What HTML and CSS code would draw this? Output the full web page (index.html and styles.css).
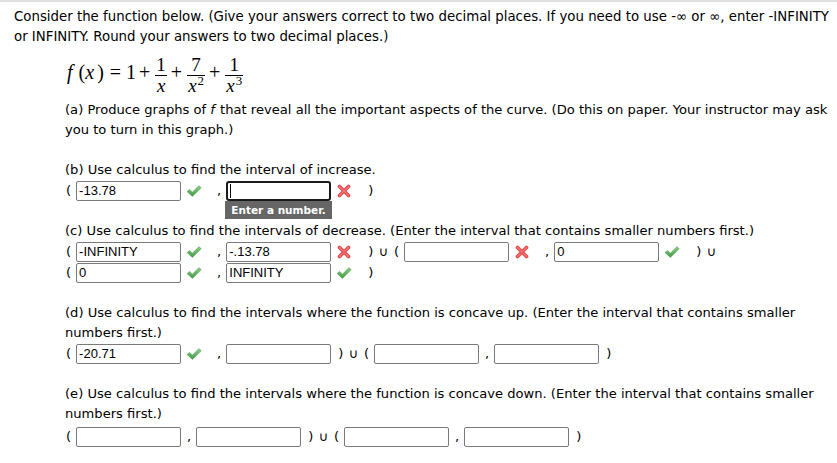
FILE: index.html
```html
<!DOCTYPE html>
<html>
<head>
<meta charset="utf-8">
<link rel="stylesheet" href="styles.css">
</head>
<body>
<div class="page">
  <p class="intro">Consider the function below. (Give your answers correct to two decimal places. If you need to use -∞ or ∞, enter -INFINITY or INFINITY. Round your answers to two decimal places.)</p>

  <div class="formula">
    <span class="mi f">f</span><span class="mo lp">(</span><span class="mi">x</span><span class="mo rp">)</span><span class="mo eq">=</span><span class="mn one">1</span><span class="mo pl first">+</span><span class="frac"><span class="num">1</span><span class="den"><span class="mi">x</span></span></span><span class="mo pl">+</span><span class="frac"><span class="num">7</span><span class="den"><span class="mi">x</span><sup>2</sup></span></span><span class="mo pl">+</span><span class="frac"><span class="num">1</span><span class="den"><span class="mi">x</span><sup>3</sup></span></span>
  </div>

  <div class="part">
    <p>(a) Produce graphs of <i class="fi">f</i> that reveal all the important aspects of the curve. (Do this on paper. Your instructor may ask you to turn in this graph.)</p>
  </div>

  <div class="part">
    <p>(b) Use calculus to find the interval of increase.</p>
    <div class="row">
      <span class="lpar">(</span>
      <span class="field"><input class="ans" type="text" value="-13.78"></span>
      <span class="icon ok"><svg viewBox="0 0 16 14" width="16" height="14"><defs><linearGradient id="g1" x1="0" y1="0" x2="0" y2="1"><stop offset="0" stop-color="#8fd08f"/><stop offset="1" stop-color="#3f9a3f"/></linearGradient></defs><path d="M1 7.6 L3.6 5.4 L6.4 8.2 L13 1.6 L15.2 3.8 L6.4 12.4 Z" fill="url(#g1)" stroke="#4a9a4a" stroke-width="0.5" stroke-linejoin="round"/></svg></span>
      <span class="comma">,</span>
      <span class="field focus"><input class="ans focused" type="text" value=""><span class="caret"></span><span class="tip">Enter a number.</span></span>
      <span class="icon bad"><svg viewBox="0 0 16 14" width="16" height="14"><path d="M3.5 2.5 L12.5 11.5 M12.5 2.5 L3.5 11.5" stroke="#e8474a" stroke-width="3.6" stroke-linecap="round"/><path d="M3.5 2.5 L12.5 11.5 M12.5 2.5 L3.5 11.5" stroke="#f47a7c" stroke-width="1.2" stroke-linecap="round"/></svg></span>
      <span class="rpar">)</span>
    </div>
  </div>

  <div class="part">
    <p>(c) Use calculus to find the intervals of decrease. (Enter the interval that contains smaller numbers first.)</p>
    <div class="row">
      <span class="lpar">(</span>
      <span class="field"><input class="ans" type="text" value="-INFINITY"></span>
      <span class="icon ok"><svg viewBox="0 0 16 14" width="16" height="14"><path d="M1 7.6 L3.6 5.4 L6.4 8.2 L13 1.6 L15.2 3.8 L6.4 12.4 Z" fill="url(#g1)" stroke="#4a9a4a" stroke-width="0.5" stroke-linejoin="round"/></svg></span>
      <span class="comma">,</span>
      <span class="field"><input class="ans" type="text" value="-.13.78"></span>
      <span class="icon bad"><svg viewBox="0 0 16 14" width="16" height="14"><path d="M3.5 2.5 L12.5 11.5 M12.5 2.5 L3.5 11.5" stroke="#e8474a" stroke-width="3.6" stroke-linecap="round"/><path d="M3.5 2.5 L12.5 11.5 M12.5 2.5 L3.5 11.5" stroke="#f47a7c" stroke-width="1.2" stroke-linecap="round"/></svg></span>
      <span class="rpar">)</span>
      <span class="cup">∪</span>
      <span class="lpar">(</span>
      <span class="field"><input class="ans" type="text" value=""></span>
      <span class="icon bad"><svg viewBox="0 0 16 14" width="16" height="14"><path d="M3.5 2.5 L12.5 11.5 M12.5 2.5 L3.5 11.5" stroke="#e8474a" stroke-width="3.6" stroke-linecap="round"/><path d="M3.5 2.5 L12.5 11.5 M12.5 2.5 L3.5 11.5" stroke="#f47a7c" stroke-width="1.2" stroke-linecap="round"/></svg></span>
      <span class="comma">,</span>
      <span class="field"><input class="ans" type="text" value="0"></span>
      <span class="icon ok"><svg viewBox="0 0 16 14" width="16" height="14"><path d="M1 7.6 L3.6 5.4 L6.4 8.2 L13 1.6 L15.2 3.8 L6.4 12.4 Z" fill="url(#g1)" stroke="#4a9a4a" stroke-width="0.5" stroke-linejoin="round"/></svg></span>
      <span class="rpar">)</span>
      <span class="cup">∪</span>
    </div>
    <div class="row">
      <span class="lpar">(</span>
      <span class="field"><input class="ans" type="text" value="0"></span>
      <span class="icon ok"><svg viewBox="0 0 16 14" width="16" height="14"><path d="M1 7.6 L3.6 5.4 L6.4 8.2 L13 1.6 L15.2 3.8 L6.4 12.4 Z" fill="url(#g1)" stroke="#4a9a4a" stroke-width="0.5" stroke-linejoin="round"/></svg></span>
      <span class="comma">,</span>
      <span class="field"><input class="ans" type="text" value="INFINITY"></span>
      <span class="icon ok"><svg viewBox="0 0 16 14" width="16" height="14"><path d="M1 7.6 L3.6 5.4 L6.4 8.2 L13 1.6 L15.2 3.8 L6.4 12.4 Z" fill="url(#g1)" stroke="#4a9a4a" stroke-width="0.5" stroke-linejoin="round"/></svg></span>
      <span class="rpar">)</span>
    </div>
  </div>

  <div class="part">
    <p>(d) Use calculus to find the intervals where the function is concave up. (Enter the interval that contains smaller numbers first.)</p>
    <div class="row">
      <span class="lpar">(</span>
      <span class="field"><input class="ans" type="text" value="-20.71"></span>
      <span class="icon ok"><svg viewBox="0 0 16 14" width="16" height="14"><path d="M1 7.6 L3.6 5.4 L6.4 8.2 L13 1.6 L15.2 3.8 L6.4 12.4 Z" fill="url(#g1)" stroke="#4a9a4a" stroke-width="0.5" stroke-linejoin="round"/></svg></span>
      <span class="comma">,</span>
      <span class="field"><input class="ans" type="text" value=""></span>
      <span class="rpar">)</span>
      <span class="cup">∪</span>
      <span class="lpar">(</span>
      <span class="field"><input class="ans" type="text" value=""></span>
      <span class="comma">,</span>
      <span class="field"><input class="ans" type="text" value=""></span>
      <span class="rpar">)</span>
    </div>
  </div>

  <div class="part">
    <p>(e) Use calculus to find the intervals where the function is concave down. (Enter the interval that contains smaller numbers first.)</p>
    <div class="row last">
      <span class="lpar">(</span>
      <span class="field"><input class="ans" type="text" value=""></span>
      <span class="comma">,</span>
      <span class="field"><input class="ans" type="text" value=""></span>
      <span class="rpar">)</span>
      <span class="cup">∪</span>
      <span class="lpar">(</span>
      <span class="field"><input class="ans" type="text" value=""></span>
      <span class="comma">,</span>
      <span class="field"><input class="ans" type="text" value=""></span>
      <span class="rpar">)</span>
    </div>
  </div>
</div>
</body>
</html>
```

FILE: styles.css
```css
html, body {
  margin: 0;
  padding: 0;
  background: #fff;
}
body {
  font-family: "DejaVu Sans", Verdana, sans-serif;
  font-size: 13.33px;
  color: #000;
}
.page {
  border-top: 2px solid #e0e0e0;
  padding: 5px 4px 0 14px;
}
p {
  margin: 0;
  line-height: 20px;
}
.formula {
  height: 50px;
  display: flex;
  align-items: center;
  padding-left: 53px;
  font-family: "Liberation Serif", "DejaVu Serif", serif;
  font-size: 20px;
  line-height: 1;
}
.mi { font-style: italic; }
.f { margin-right: 6px; }
.rp { margin-left: 3px; }
.eq { margin-left: 6px; }
.one { margin-left: 5px; }
.pl { margin: 0 5px 0 4px; }
.pl.first { margin: 0 5px 0 3px; }
.frac {
  display: inline-flex;
  flex-direction: column;
  align-items: center;
  font-size: 19px;
  position: relative;
  top: 3px;
}
.num {
  line-height: 17px;
  padding: 0 1px 2px;
}
.den {
  border-top: 1px solid #000;
  line-height: 17px;
  padding: 1px 1px 0;
  width: 100%;
  text-align: center;
  box-sizing: border-box;
}
.den sup {
  font-size: 13px;
  vertical-align: 7px;
  line-height: 0;
  margin-left: 1px;
}
.fi { font-style: italic; margin-right: 1px; }
.part {
  margin: 0 0 0 51px;
  font-size: 13.1px;
}
.formula + .part { margin-top: 3px; }
.part + .part { margin-top: 20px; }
.row {
  display: flex;
  align-items: center;
  height: 21px;
  white-space: nowrap;
}
.row.last { margin-top: 2px; }
.lpar { margin: 0 5px 0 1px; }
.field {
  position: relative;
  display: inline-block;
  height: 20px;
}
.ans {
  box-sizing: border-box;
  width: 105px;
  height: 20px;
  margin: 0;
  padding: 0 2px;
  border: 1px solid #7a7a7a;
  border-radius: 2px;
  background: #fff;
  font-family: "Liberation Sans", Arial, sans-serif;
  font-size: 13px;
  color: #000;
  outline: none;
}
.ans.focused {
  border: 2px solid #1a1a1a;
  border-radius: 3px;
}
.caret {
  position: absolute;
  left: 4px;
  top: 3px;
  width: 1px;
  height: 14px;
  background: #000;
}
.tip {
  position: absolute;
  left: -1px;
  top: 20px;
  height: 18px;
  line-height: 18px;
  padding: 0 6px;
  background: #666;
  color: #fff;
  font-size: 10.5px;
  font-weight: bold;
  white-space: nowrap;
  z-index: 2;
}
.icon {
  display: inline-flex;
  width: 16px;
  height: 14px;
  margin: 0 9px 0 5px;
}
.icon svg { display: block; }
.comma { margin: 0 5px 0 6px; }
.rpar { margin-left: 7px; }
.cup { margin: 0 5px 0 5px; }
```
